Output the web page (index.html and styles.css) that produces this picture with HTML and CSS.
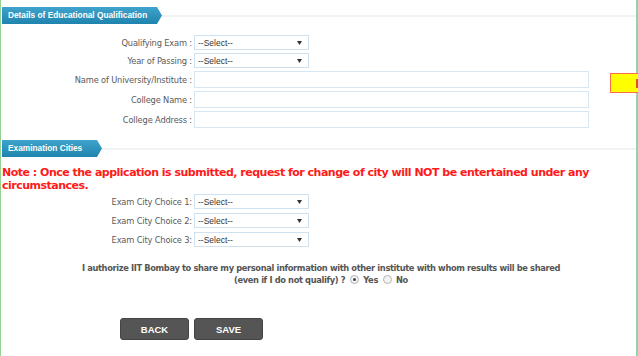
FILE: index.html
```html
<!DOCTYPE html>
<html lang="en">
<head>
    <meta charset="UTF-8">
    <title>Application Form | Qualification</title>
    <link rel="stylesheet" href="styles.css">
</head>
<body>

    <div class="page">

        <div class="section-head">
            <div class="tab">Details of Educational Qualification</div>
            <div class="rule"></div>
        </div>

        <div class="form-block">
            <div class="row">
                <label>Qualifying Exam :</label>
                <select><option>--Select--</option></select>
            </div>
            <div class="row">
                <label>Year of Passing :</label>
                <select><option>--Select--</option></select>
            </div>
            <div class="row text-row">
                <label>Name of University/Institute :</label>
                <input type="text">
                <span class="warn"><i></i></span>
            </div>
            <div class="row text-row">
                <label>College Name :</label>
                <input type="text">
            </div>
            <div class="row text-row">
                <label>College Address :</label>
                <input type="text">
            </div>
        </div>

        <div class="section-head second">
            <div class="tab short">Examination Cities</div>
            <div class="rule"></div>
        </div>

        <p class="note">Note : Once the application is submitted, request for change of city will NOT be entertained under any circumstances.</p>

        <div class="form-block cities">
            <div class="row">
                <label>Exam City Choice 1:</label>
                <select><option>--Select--</option></select>
            </div>
            <div class="row">
                <label>Exam City Choice 2:</label>
                <select><option>--Select--</option></select>
            </div>
            <div class="row">
                <label>Exam City Choice 3:</label>
                <select><option>--Select--</option></select>
            </div>
        </div>

        <div class="consent">
            <p>I authorize IIT Bombay to share my personal information with other institute with whom results will be shared</p>
            <p>(even if I do not qualify) ?
                <span class="radio checked"></span> Yes
                <span class="radio"></span> No
            </p>
        </div>

        <div class="buttons">
            <button>BACK</button>
            <button>SAVE</button>
        </div>

    </div>

</body>
</html>
```

FILE: styles.css
```css
* {
    margin: 0;
    padding: 0;
    box-sizing: border-box;
}

body {
    font-family: Tahoma, "DejaVu Sans", Verdana, sans-serif;
    background-color: #fff;
    color: #555;
    overflow: hidden;
}

.page {
    position: relative;
    width: 638px;
    height: 356px;
    border-left: 1px solid #93d393;
    border-right: 2px solid #93d3a8;
    padding: 7px 0 0 1px;
}


.section-head {
    display: flex;
    align-items: center;
}

.section-head.second {
    margin-top: 10.5px;
}

.tab {
    width: 160px;
    height: 17px;
    line-height: 17px;
    padding-left: 6px;
    color: #fff;
    font-family: "Liberation Sans", Arial, sans-serif;
    font-size: 8.3px;
    font-weight: bold;
    background: linear-gradient(#3fa3cc, #1f84ad);
    clip-path: polygon(0 0, 155px 0, 100% 50%, 155px 100%, 0 100%);
}

.tab.short {
    width: 100px;
    clip-path: polygon(0 0, 95px 0, 100% 50%, 95px 100%, 0 100%);
}

.rule {
    flex: 1;
    height: 2px;
    background-color: #f2f2f2;
}


.form-block {
    margin-top: 9.5px;
}

.row {
    display: flex;
    align-items: center;
    height: 18px;
}

.row label {
    width: 192px;
    padding-right: 2px;
    text-align: right;
    font-size: 8.3px;
    letter-spacing: -0.17px;
    color: #5a5a5a;
}

.row select {
    appearance: none;
    width: 115px;
    height: 15px;
    border: 1px solid #cfe0ef;
    background: #fff url("data:image/svg+xml;utf8,<svg xmlns='http://www.w3.org/2000/svg' width='5' height='4'><path d='M0 0h5L2.5 4z' fill='%23333'/></svg>") no-repeat right 6px center;
    font-family: "Liberation Sans", Arial, sans-serif;
    font-size: 8.5px;
    color: #333;
    padding-left: 3px;
}

.text-row {
    height: 20px;
}

.text-row input {
    width: 395px;
    height: 17px;
    border: 1px solid #d6e6f2;
    background-color: #fff;
}

.warn {
    position: absolute;
    left: 609px;
    top: 73px;
    width: 40px;
    height: 20px;
    background-color: #ffff00;
    border: 1px solid #ff6a4a;
}

.warn i {
    position: absolute;
    left: 25px;
    top: 5px;
    width: 4px;
    height: 9px;
    background-color: #e2540e;
}


.note {
    margin-top: 9px;
    color: #ff1a1a;
    font-family: "DejaVu Sans", Verdana, sans-serif;
    font-size: 11px;
    font-weight: bold;
    line-height: 13px;
    letter-spacing: -0.5px;
}

.cities .row {
    height: 19px;
}

.cities {
    margin-top: 0;
}


.consent {
    margin-top: 13px;
    text-align: center;
    font-size: 8.3px;
    font-weight: bold;
    letter-spacing: -0.36px;
    color: #555;
    line-height: 12px;
    width: 638px;
}

.radio {
    display: inline-block;
    width: 9px;
    height: 9px;
    border: 1px solid #b5b5b5;
    border-radius: 50%;
    background-color: #f2f2f2;
    vertical-align: -1px;
    margin: 0 2px;
    position: relative;
}

.radio.checked::after {
    content: "";
    position: absolute;
    left: 2px;
    top: 2px;
    width: 3px;
    height: 3px;
    border-radius: 50%;
    background-color: #444;
}


.buttons {
    display: flex;
    gap: 5px;
    margin-top: 32px;
    padding-left: 118px;
}

.buttons button {
    width: 69px;
    height: 22px;
    background-color: #555;
    border: 1px solid #444;
    border-radius: 3px;
    color: #fff;
    font-family: "Liberation Sans", Arial, sans-serif;
    font-size: 9.5px;
    font-weight: bold;
}
```
